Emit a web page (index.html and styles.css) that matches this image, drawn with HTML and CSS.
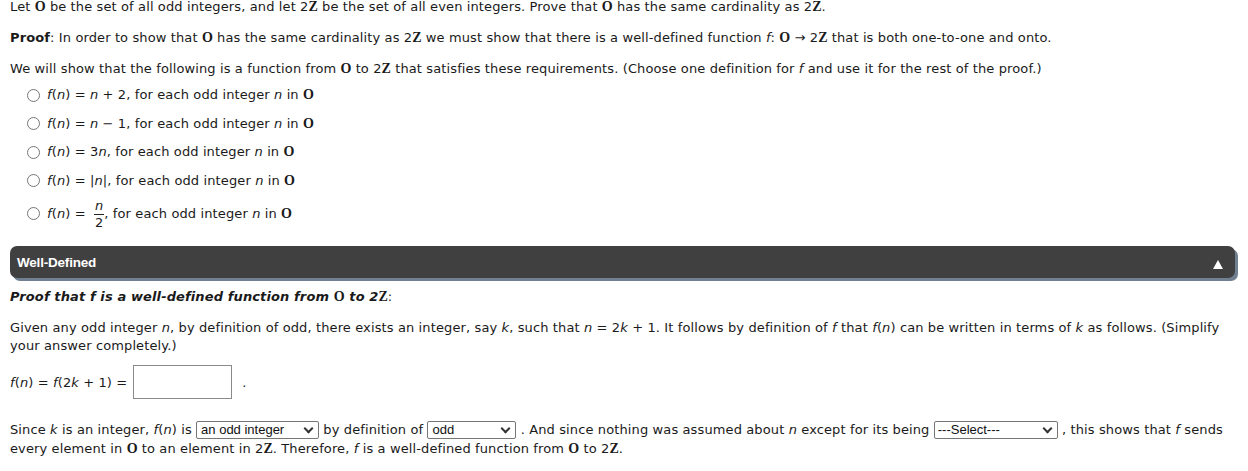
FILE: index.html
```
<!DOCTYPE html>
<html>
<head>
<meta charset="utf-8">
<link rel="stylesheet" href="styles.css">
</head>
<body>
<div class="page">
  <p class="line l1">Let <b class="set">O</b> be the set of all odd integers, and let 2<b class="set">Z</b> be the set of all even integers. Prove that <b class="set">O</b> has the same cardinality as 2<b class="set">Z</b>.</p>
  <p class="line l2"><strong>Proof</strong>: In order to show that <b class="set">O</b> has the same cardinality as 2<b class="set">Z</b> we must show that there is a well-defined function <i>f</i>: <b class="set">O</b> &rarr; 2<b class="set">Z</b> that is both one-to-one and onto.</p>
  <p class="line l3">We will show that the following is a function from <b class="set">O</b> to 2<b class="set">Z</b> that satisfies these requirements. (Choose one definition for <i>f</i> and use it for the rest of the proof.)</p>
  <div class="options">
    <label class="opt"><span class="radio"></span><span><i>f</i>(<i>n</i>) = <i>n</i> + 2, for each odd integer <i>n</i> in <b class="set">O</b></span></label>
    <label class="opt"><span class="radio"></span><span><i>f</i>(<i>n</i>) = <i>n</i> &minus; 1, for each odd integer <i>n</i> in <b class="set">O</b></span></label>
    <label class="opt"><span class="radio"></span><span><i>f</i>(<i>n</i>) = 3<i>n</i>, for each odd integer <i>n</i> in <b class="set">O</b></span></label>
    <label class="opt"><span class="radio"></span><span><i>f</i>(<i>n</i>) = |<i>n</i>|, for each odd integer <i>n</i> in <b class="set">O</b></span></label>
    <label class="opt optfrac"><span class="radio"></span><span class="fracline"><i>f</i>(<i>n</i>) = <span class="frac"><span class="num"><i>n</i></span><span class="den">2</span></span>, for each odd integer <i>n</i> in <b class="set">O</b></span></label>
  </div>
  <div class="bar"><span class="bar-title">Well-Defined</span><span class="tri"></span></div>
  <p class="line heading"><b><i>Proof that f is a well-defined function from <span class="set">O</span> to 2<span class="set">Z</span></i></b>:</p>
  <p class="line given">Given any odd integer <i>n</i>, by definition of odd, there exists an integer, say <i>k</i>, such that <i>n</i> = 2<i>k</i> + 1. It follows by definition of <i>f</i> that <i>f</i>(<i>n</i>) can be written in terms of <i>k</i> as follows. (Simplify your answer completely.)</p>
  <div class="eqrow"><span><i>f</i>(<i>n</i>) = <i>f</i>(2<i>k</i> + 1) = </span><span class="answer"></span><span class="dot">.</span></div>
  <p class="line since">Since <i>k</i> is an integer, <i>f</i>(<i>n</i>) is <span class="sel w1">an odd integer</span> by definition of <span class="sel w2">odd</span> . And since nothing was assumed about <i>n</i> except for its being <span class="sel w3">---Select---</span> , this shows that <i>f</i> sends every element in <b class="set">O</b> to an element in 2<b class="set">Z</b>. Therefore, <i>f</i> is a well-defined function from <b class="set">O</b> to 2<b class="set">Z</b>.</p>
</div>
</body>
</html>
```
FILE: styles.css
```
html, body { margin: 0; padding: 0; background: #fff; }
body { font-family: "DejaVu Sans", Verdana, sans-serif; font-size: 13px; letter-spacing: 0.12px; color: #1a1a1a; }
.page { padding: 0 10px; width: 1228px; }
.line { margin: 0; line-height: 18px; }
.set { font-family: "Liberation Serif", "Times New Roman", serif; font-weight: bold; font-size: 14px; font-style: normal; letter-spacing: 0; }
.l1 { margin-top: -2px; }
.l2 { margin-top: 13px; }
.l3 { margin-top: 13px; }
.options { margin-top: 3px; display: flex; flex-direction: column; }
.opt { display: flex; align-items: center; height: 28.5px; padding-left: 17px; }
.optfrac { height: 37px; }
.radio { width: 11px; height: 11px; border: 1px solid #767676; border-radius: 50%; margin-right: 7px; flex: none; }
.fracline { display: flex; align-items: center; white-space: pre; }
.frac { display: inline-flex; flex-direction: column; text-align: center; margin: 0 0 0 4px; }
.num { border-bottom: 1px solid #222; padding: 0 1px 1px; font-size: 13px; line-height: 15px; }
.den { font-size: 13px; line-height: 15px; }
.bar { margin-top: 14px; height: 32px; background: #404040; border-radius: 7px; box-shadow: 3px 3px 0 #708090; display: flex; align-items: center; justify-content: space-between; padding: 0 12px 0 7px; width: 1206px; }
.bar-title { font-family: "Liberation Sans", Arial, sans-serif; font-weight: bold; font-size: 13.5px; color: #fff; letter-spacing: -0.2px; }
.tri { width: 0; height: 0; border-left: 5px solid transparent; border-right: 5px solid transparent; border-bottom: 9px solid #fff; margin-top: 5px; }
.heading { margin-top: 10px; }
.given { margin-top: 13px; }
.eqrow { display: flex; align-items: center; margin-top: 10px; }
.answer { display: inline-block; width: 97px; height: 32px; border: 1px solid #8a8a8a; margin-left: 6px; }
.dot { margin-left: 10px; }
.since { margin-top: 21px; line-height: 19px; }
.sel { display: inline-block; box-sizing: border-box; height: 18px; margin: -3px 0; border: 1px solid #767676; border-radius: 2px; font-family: "Liberation Sans", Arial, sans-serif; font-size: 13px; letter-spacing: 0; line-height: 16px; padding: 0 18px 0 4px; vertical-align: baseline; position: relative; color: #111; }
.sel::after { content: ""; position: absolute; right: 6px; top: 3px; width: 5px; height: 5px; border-right: 2px solid #333; border-bottom: 2px solid #333; transform: rotate(45deg); }
.w1 { width: 123px; }
.w2 { width: 89px; }
.w3 { width: 124px; padding-left: 3px; }
```
